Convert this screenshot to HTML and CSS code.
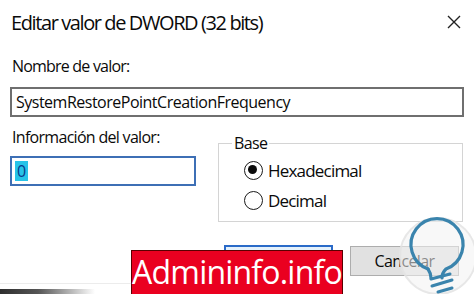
FILE: index.html
```html
<!DOCTYPE html>
<html lang="es">
<head>
<meta charset="utf-8">
<title>Editar valor de DWORD (32 bits)</title>
<link rel="stylesheet" href="styles.css">
</head>
<body>
<div class="dialog">
  <div class="titlebar">
    <span class="title">Editar valor de DWORD (32 bits)</span>
    <svg class="close" width="16" height="16" viewBox="0 0 16 16"><path d="M2 2 L14 14 M14 2 L2 14" stroke="#222" stroke-width="1.4" fill="none"/></svg>
  </div>
  <div class="content">
    <div class="label">Nombre de valor:</div>
    <div class="input name">SystemRestorePointCreationFrequency</div>
    <div class="lower">
      <div class="left">
        <div class="label">Información del valor:</div>
        <div class="input data"><span class="sel">0</span></div>
      </div>
      <fieldset class="base">
        <legend>Base</legend>
        <div class="radio"><span class="dot on"></span>Hexadecimal</div>
        <div class="radio"><span class="dot"></span>Decimal</div>
      </fieldset>
    </div>
    <div class="buttons">
      <div class="btn ok"></div>
      <div class="btn cancel">Cancelar</div>
    </div>
  </div>
  <div class="footer"><span class="shade"></span></div>
  <div class="watermark">Admininfo.info</div>
  <svg class="bulb" width="80" height="80" viewBox="0 0 80 80">
    <circle cx="40" cy="42" r="39" fill="#f2f2f2" opacity="0.55"/>
    <circle cx="40" cy="42" r="38" fill="none" stroke="#e2e2e2" stroke-width="2" opacity="0.8"/>
    <path d="M30 55 A26 26 0 1 1 48 55 C45 58 44 61 44 64" fill="none" stroke="#3a84ad" stroke-width="3.2" stroke-linecap="round"/>
    <path d="M30 55 C32 58 33 61 33 64" fill="none" stroke="#3a84ad" stroke-width="3.2" stroke-linecap="round"/>
    <path d="M33 65 L52 60 M34 72 L54 66 M40 78 L54 74" fill="none" stroke="#3a84ad" stroke-width="3" stroke-linecap="round"/>
  </svg>
</div>
</body>
</html>
```
FILE: styles.css
```css
html, body {
  margin: 0;
  padding: 0;
  background: #fff;
}
body {
  width: 474px;
  height: 294px;
  overflow: hidden;
  font-family: "Open Sans", "Noto Sans", sans-serif;
  color: #000;
}
.dialog {
  position: relative;
  width: 474px;
  height: 294px;
  display: flex;
  flex-direction: column;
}
.titlebar {
  height: 44px;
  display: flex;
  align-items: center;
  justify-content: space-between;
  padding: 0 12px 0 11px;
}
.title {
  font-size: 20px;
  letter-spacing: -1.4px;
  color: #0a0a0a;
}
.content {
  padding: 0 10px;
  display: flex;
  flex-direction: column;
}
.label {
  font-size: 16px;
  line-height: 20px;
  letter-spacing: -0.8px;
  padding-left: 2px;
  margin-top: 12px;
  color: #0a0a0a;
}
.input {
  box-sizing: border-box;
  height: 30px;
  font-size: 16px;
  line-height: 26px;
  padding-left: 4px;
  letter-spacing: -0.5px;
  color: #0a0a0a;
}
.name {
  margin-top: 11px;
  border: 2px solid #6f6f6f;
  width: 454px;
}
.lower {
  display: flex;
  margin-top: 10px;
}
.left {
  width: 186px;
  display: flex;
  flex-direction: column;
}
.left .label {
  margin-top: 0;
  letter-spacing: -0.7px;
}
.data {
  margin-top: 9px;
  border: 2px solid #3d6fb5;
  padding-left: 3px;
  display: flex;
  align-items: center;
}
.sel {
  background: #27c3e8;
  color: #0a3a8a;
  line-height: 20px;
  padding: 0 2px;
}
.base {
  margin: 7px 0 0 22px;
  padding: 0 0 0 25px;
  width: 245px;
  height: 88px;
  box-sizing: border-box;
  border: 1px solid #d4d4d4;
  display: flex;
  flex-direction: column;
}
.base legend {
  font-size: 16px;
  letter-spacing: -0.6px;
  padding: 0 2px;
  margin-left: -12px;
  line-height: 18px;
  color: #0a0a0a;
}
.radio {
  display: flex;
  align-items: center;
  font-size: 17px;
  letter-spacing: -0.8px;
  height: 30px;
  margin-top: 3px;
  color: #0a0a0a;
}
.radio + .radio {
  margin-top: 0;
}
.dot {
  box-sizing: border-box;
  width: 19px;
  height: 19px;
  border: 1.7px solid #1a1a1a;
  border-radius: 50%;
  margin-right: 5px;
  position: relative;
}
.dot.on::after {
  content: "";
  position: absolute;
  left: 3.3px;
  top: 3.3px;
  width: 9px;
  height: 9px;
  border-radius: 50%;
  background: #0a0a0a;
}
.buttons {
  display: flex;
  justify-content: flex-end;
  gap: 17px;
  margin-top: 23px;
  padding-right: 5px;
}
.btn {
  box-sizing: border-box;
  width: 109px;
  height: 30px;
  display: flex;
  align-items: center;
  justify-content: center;
  font-size: 16px;
  letter-spacing: -0.6px;
  background: #e1e1e1;
  border: 1px solid #adadad;
  color: #0a0a0a;
}
.ok {
  border: 2px solid #2a6ac8;
  background: #e5f1fb;
}
.cancel {
  margin-top: 1px;
}
.footer {
  margin-top: auto;
  height: 11px;
  box-sizing: border-box;
  border-top: 1px solid #ececec;
  width: 131px;
}
.shade {
  display: block;
  width: 95px;
  height: 5px;
  margin-top: 5px;
  background: linear-gradient(to right, #2e2e2e, #555 40%, rgba(120,120,120,0));
}
.watermark {
  position: absolute;
  left: 131px;
  top: 250px;
  width: 212px;
  height: 46px;
  box-sizing: border-box;
  background: #ea0020;
  border: 1px solid #5a0000;
  color: #fff;
  font-family: "Open Sans", "Noto Sans", sans-serif;
  font-size: 32px;
  line-height: 42px;
  text-align: center;
  letter-spacing: -0.8px;
}
.bulb {
  position: absolute;
  left: 398px;
  top: 214px;
}
```
